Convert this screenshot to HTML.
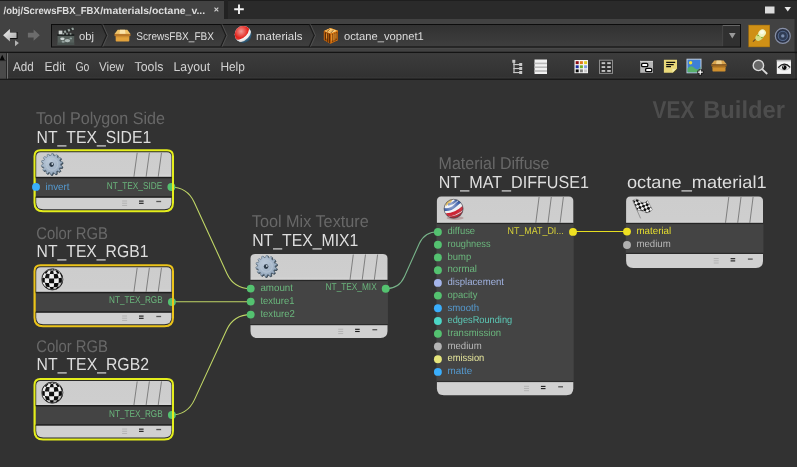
<!DOCTYPE html>
<html lang="en"><head><meta charset="utf-8"><title>VEX Builder - /obj/ScrewsFBX_FBX/materials/octane_vopnet1</title>
<style>
html,body{margin:0;padding:0;background:#323232;overflow:hidden}
svg{display:block;will-change:transform;filter:contrast(1)}
text{font-family:"Liberation Sans",sans-serif;white-space:pre;text-rendering:geometricPrecision}
</style></head><body>
<svg width="797" height="467" viewBox="0 0 797 467">
<rect x="0" y="0" width="797" height="467" fill="#323232"/>
<defs>
<linearGradient id="capg" x1="0" y1="0" x2="0" y2="1"><stop offset="0" stop-color="#cdcdcd"/><stop offset="0.85" stop-color="#cecece"/><stop offset="1" stop-color="#d8d8d8"/></linearGradient>
<linearGradient id="menug" x1="0" y1="0" x2="0" y2="1"><stop offset="0" stop-color="#3c3c3c"/><stop offset="1" stop-color="#313131"/></linearGradient>
<linearGradient id="pathg" x1="0" y1="0" x2="0" y2="1"><stop offset="0" stop-color="#313131"/><stop offset="1" stop-color="#3f3f3f"/></linearGradient>
<radialGradient id="ballsh" cx="0.38" cy="0.32" r="0.75"><stop offset="0" stop-color="#fff" stop-opacity="0.55"/><stop offset="0.55" stop-color="#fff" stop-opacity="0"/><stop offset="1" stop-color="#000" stop-opacity="0.45"/></radialGradient>
<radialGradient id="gearg" cx="0.4" cy="0.35" r="0.8"><stop offset="0" stop-color="#bccada"/><stop offset="1" stop-color="#8ea2b8"/></radialGradient>
<radialGradient id="ballsh2" cx="0.4" cy="0.35" r="0.75"><stop offset="0" stop-color="#fff" stop-opacity="0.12"/><stop offset="0.6" stop-color="#000" stop-opacity="0"/><stop offset="1" stop-color="#000" stop-opacity="0.5"/></radialGradient>
<clipPath id="cball"><circle cx="0" cy="0" r="9.5"/></clipPath>
<clipPath id="cball8"><circle cx="0" cy="0" r="8.2"/></clipPath>
</defs>
<path d="M170.5,187 Q187.2,187 194.2,202.2 L226.9,273.4 Q233.9,288.6 250.6,288.6" fill="none" stroke="#c0d666" stroke-width="1.08"/>
<line x1="170.5" y1="301.8" x2="250.6" y2="301.8" stroke="#c0d666" stroke-width="1.08"/>
<path d="M170.5,415 Q187.5,415 194.5,399.6 L226.6,330.0 Q233.6,314.6 250.6,314.6" fill="none" stroke="#c0d666" stroke-width="1.08"/>
<path d="M385.8,288.7 Q399.0,288.7 404.4,276.7 L419.2,243.8 Q424.6,231.8 437.8,231.8" fill="none" stroke="#78b48a" stroke-width="1.1"/>
<line x1="573" y1="231.5" x2="627" y2="231.5" stroke="#e6de20" stroke-width="1.2"/>
<path d="M34.5,156.20000000000002 Q34.5,150.20000000000002 40.5,150.20000000000002 L167.0,150.20000000000002 Q173.0,150.20000000000002 173.0,156.20000000000002 L173.0,202.79999999999998 Q173.0,211.29999999999998 164.5,211.29999999999998 L43.0,211.29999999999998 Q34.5,211.29999999999998 34.5,202.79999999999998 Z" fill="#2a2a2a" stroke="#e4ee1c" stroke-width="2.0"/>
<rect x="34.5" y="177.5" width="1.30" height="19.599999999999994" fill="#e4ee1c"/>
<rect x="171.4" y="177.0" width="0.8" height="20.599999999999994" fill="#444444"/>
<rect x="35.800000000000004" y="177.0" width="136.0" height="20.599999999999994" fill="#444444"/>
<path d="M36.2,177.5 L36.2,156.8 Q36.2,152.3 40.7,152.3 L166.9,152.3 Q171.4,152.3 171.4,156.8 L171.4,177.5 Z" fill="url(#capg)"/>
<rect x="35.800000000000004" y="176.8" width="136.0" height="1.5" fill="#1e1e1e"/>
<path d="M36.2,197.1 L171.4,197.1 L171.4,202.2 Q171.4,209.2 164.4,209.2 L43.2,209.2 Q36.2,209.2 36.2,202.2 Z" fill="#d0d0d0"/>
<rect x="35.800000000000004" y="196.29999999999998" width="136.0" height="1.5" fill="#1e1e1e"/>
<line x1="137.2" y1="152.70000000000002" x2="133.9" y2="176.9" stroke="#707070" stroke-width="0.85"/>
<line x1="149.4" y1="152.70000000000002" x2="146.1" y2="176.9" stroke="#707070" stroke-width="0.85"/>
<line x1="161.5" y1="152.70000000000002" x2="158.2" y2="176.9" stroke="#707070" stroke-width="0.85"/>
<rect x="122.10000000000001" y="200.55" width="5" height="0.9" fill="#b0b0b0"/>
<rect x="122.10000000000001" y="202.75" width="5" height="0.9" fill="#b0b0b0"/>
<rect x="122.10000000000001" y="204.95" width="5" height="0.9" fill="#b0b0b0"/>
<rect x="139.0" y="200.55" width="4.6" height="1.1" fill="#1a1a1a"/>
<rect x="139.0" y="202.75" width="4.6" height="1.1" fill="#1a1a1a"/>
<rect x="156.3" y="200.85" width="4.8" height="1.3" fill="#555"/>
<text x="35.9" y="124.1" font-size="17.0" fill="#686868" textLength="129.1" lengthAdjust="spacingAndGlyphs" >Tool Polygon Side</text>
<text x="36.6" y="142.7" font-size="17.4" fill="#dedede" textLength="114.6" lengthAdjust="spacingAndGlyphs" >NT_TEX_SIDE1</text>
<path d="M61.13,165.86 L62.86,167.03 L62.47,168.40 L60.38,168.48 L59.81,169.50 L60.87,171.31 L59.92,172.37 L58.00,171.53 L57.05,172.21 L57.22,174.29 L55.90,174.84 L54.54,173.25 L53.38,173.45 L52.63,175.40 L51.21,175.32 L50.67,173.30 L49.55,172.97 L48.02,174.41 L46.77,173.72 L47.16,171.66 L46.29,170.88 L44.29,171.51 L43.47,170.35 L44.72,168.67 L44.27,167.59 L42.20,167.28 L41.96,165.88 L43.81,164.91 L43.87,163.74 L42.14,162.57 L42.53,161.20 L44.62,161.12 L45.19,160.10 L44.13,158.29 L45.08,157.23 L47.00,158.07 L47.95,157.39 L47.78,155.31 L49.10,154.76 L50.46,156.35 L51.62,156.15 L52.37,154.20 L53.79,154.28 L54.33,156.30 L55.45,156.63 L56.98,155.19 L58.23,155.88 L57.84,157.94 L58.71,158.72 L60.71,158.09 L61.53,159.25 L60.28,160.93 L60.73,162.01 L62.80,162.32 L63.04,163.72 L61.19,164.69Z" fill="#34424f" stroke="#34424f" stroke-width="0.8" stroke-linejoin="round"/>
<path d="M60.43,165.16 L62.16,166.33 L61.77,167.70 L59.68,167.78 L59.11,168.80 L60.17,170.61 L59.22,171.67 L57.30,170.83 L56.35,171.51 L56.52,173.59 L55.20,174.14 L53.84,172.55 L52.68,172.75 L51.93,174.70 L50.51,174.62 L49.97,172.60 L48.85,172.27 L47.32,173.71 L46.07,173.02 L46.46,170.96 L45.59,170.18 L43.59,170.81 L42.77,169.65 L44.02,167.97 L43.57,166.89 L41.50,166.58 L41.26,165.18 L43.11,164.21 L43.17,163.04 L41.44,161.87 L41.83,160.50 L43.92,160.42 L44.49,159.40 L43.43,157.59 L44.38,156.53 L46.30,157.37 L47.25,156.69 L47.08,154.61 L48.40,154.06 L49.76,155.65 L50.92,155.45 L51.67,153.50 L53.09,153.58 L53.63,155.60 L54.75,155.93 L56.28,154.49 L57.53,155.18 L57.14,157.24 L58.01,158.02 L60.01,157.39 L60.83,158.55 L59.58,160.23 L60.03,161.31 L62.10,161.62 L62.34,163.02 L60.49,163.99Z" fill="url(#gearg)" stroke="#64788c" stroke-width="0.6" stroke-linejoin="round"/>
<circle cx="52" cy="164.3" r="5.83" fill="none" stroke="#b8c6d4" stroke-width="1.2" opacity="0.7"/>
<circle cx="51.6" cy="164.60000000000002" r="2.3" fill="#2c3a48"/>
<circle cx="52.3" cy="164.0" r="0.9" fill="#c8d4e0"/>
<circle cx="36.0" cy="186.9" r="3.95" fill="#3aaefc"/>
<text x="45.5" y="189.7" font-size="10" fill="#559ad0" textLength="24" lengthAdjust="spacingAndGlyphs" >invert</text>
<text x="106.7" y="188.6" font-size="9.9" fill="#6ab67c" textLength="55.5" lengthAdjust="spacingAndGlyphs" >NT_TEX_SIDE</text>
<circle cx="171.4" cy="187" r="3.95" fill="#54c270"/>
<rect x="172.0" y="175.5" width="2.0" height="23.599999999999994" fill="#e4ee1c"/>
<path d="M34.5,271.2 Q34.5,265.2 40.5,265.2 L167.0,265.2 Q173.0,265.2 173.0,271.2 L173.0,317.8 Q173.0,326.3 164.5,326.3 L43.0,326.3 Q34.5,326.3 34.5,317.8 Z" fill="#2a2a2a" stroke="#ecc41a" stroke-width="2.0"/>
<rect x="34.5" y="292.5" width="1.30" height="19.600000000000023" fill="#ecc41a"/>
<rect x="171.4" y="292.0" width="0.8" height="20.600000000000023" fill="#444444"/>
<rect x="35.800000000000004" y="292.0" width="136.0" height="20.600000000000023" fill="#444444"/>
<path d="M36.2,292.5 L36.2,271.8 Q36.2,267.3 40.7,267.3 L166.9,267.3 Q171.4,267.3 171.4,271.8 L171.4,292.5 Z" fill="url(#capg)"/>
<rect x="35.800000000000004" y="291.8" width="136.0" height="1.5" fill="#1e1e1e"/>
<path d="M36.2,312.1 L171.4,312.1 L171.4,317.2 Q171.4,324.2 164.4,324.2 L43.2,324.2 Q36.2,324.2 36.2,317.2 Z" fill="#d0d0d0"/>
<rect x="35.800000000000004" y="311.3" width="136.0" height="1.5" fill="#1e1e1e"/>
<line x1="137.2" y1="267.7" x2="133.9" y2="291.9" stroke="#707070" stroke-width="0.85"/>
<line x1="149.4" y1="267.7" x2="146.1" y2="291.9" stroke="#707070" stroke-width="0.85"/>
<line x1="161.5" y1="267.7" x2="158.2" y2="291.9" stroke="#707070" stroke-width="0.85"/>
<rect x="122.10000000000001" y="315.55" width="5" height="0.9" fill="#b0b0b0"/>
<rect x="122.10000000000001" y="317.75" width="5" height="0.9" fill="#b0b0b0"/>
<rect x="122.10000000000001" y="319.95" width="5" height="0.9" fill="#b0b0b0"/>
<rect x="139.0" y="315.55" width="4.6" height="1.1" fill="#1a1a1a"/>
<rect x="139.0" y="317.75" width="4.6" height="1.1" fill="#1a1a1a"/>
<rect x="156.3" y="315.85" width="4.8" height="1.3" fill="#555"/>
<text x="36.3" y="238.7" font-size="17.0" fill="#686868" textLength="71.7" lengthAdjust="spacingAndGlyphs" >Color RGB</text>
<text x="36.6" y="257.4" font-size="17.4" fill="#dedede" textLength="111.8" lengthAdjust="spacingAndGlyphs" >NT_TEX_RGB1</text>
<g transform="translate(52.3,279.4)">
<circle cx="0" cy="0" r="10.6" fill="#f2f2f2"/>
<path d="M-1.92,-10.42 L-2.42,-10.32 L-2.87,-10.20 L-3.28,-10.08 L-3.63,-9.96 L-2.74,-10.24 L-1.84,-10.44 L-0.93,-10.53 L-0.00,-10.50 L-0.00,-10.50 L-0.00,-10.50 L-0.00,-10.50 L-0.00,-10.50 L-0.48,-10.58 L-0.95,-10.56 L-1.43,-10.50Z" fill="#0a0a0a"/>
<path d="M-7.05,-7.91 L-7.44,-7.55 L-7.75,-7.24 L-7.98,-6.98 L-8.15,-6.78 L-7.36,-7.62 L-6.49,-8.38 L-5.54,-9.04 L-4.52,-9.58 L-4.38,-9.65 L-4.18,-9.74 L-3.93,-9.84 L-3.63,-9.96 L-4.51,-9.59 L-5.37,-9.14 L-6.22,-8.58Z" fill="#0a0a0a"/>
<path d="M-8.37,6.51 L-8.35,6.53 L-8.29,6.61 L-8.17,6.74 L-7.93,6.88 L-8.59,5.95 L-9.14,4.94 L-9.58,3.87 L-9.89,2.75 L-10.18,2.58 L-10.32,2.41 L-10.36,2.25 L-10.39,2.11 L-10.08,3.29 L-9.63,4.42 L-9.06,5.50Z" fill="#0a0a0a"/>
<path d="M-10.27,-2.64 L-10.32,-2.44 L-10.32,-2.26 L-10.18,-2.09 L-9.89,-1.92 L-9.58,-3.07 L-9.14,-4.17 L-8.59,-5.22 L-7.93,-6.21 L-8.17,-6.35 L-8.28,-6.49 L-8.27,-6.63 L-8.15,-6.78 L-8.84,-5.84 L-9.43,-4.83 L-9.91,-3.76Z" fill="#0a0a0a"/>
<path d="M-4.52,-9.58 L-4.59,-9.50 L-4.59,-9.42 L-4.53,-9.35 L-4.40,-9.27 L-3.35,-9.77 L-2.26,-10.14 L-1.14,-10.38 L-0.00,-10.50 L-0.00,-10.50 L-0.00,-10.50 L-0.00,-10.50 L-0.00,-10.50 L-1.17,-10.46 L-2.32,-10.30 L-3.44,-10.00Z" fill="#0a0a0a"/>
<path d="M-4.40,9.64 L-4.21,9.71 L-3.96,9.78 L-3.65,9.85 L-3.28,9.91 L-4.03,9.44 L-4.72,8.85 L-5.35,8.15 L-5.91,7.35 L-6.57,7.25 L-7.13,7.13 L-7.59,7.01 L-7.93,6.88 L-7.18,7.72 L-6.33,8.47 L-5.40,9.11Z" fill="#0a0a0a"/>
<path d="M-9.89,2.75 L-9.46,2.91 L-8.89,3.07 L-8.19,3.21 L-7.38,3.34 L-7.52,2.20 L-7.57,1.03 L-7.52,-0.15 L-7.38,-1.33 L-8.19,-1.46 L-8.89,-1.60 L-9.46,-1.76 L-9.89,-1.92 L-10.09,-0.75 L-10.15,0.43 L-10.09,1.60Z" fill="#0a0a0a"/>
<path d="M-7.93,-6.21 L-7.59,-6.08 L-7.13,-5.96 L-6.57,-5.84 L-5.91,-5.74 L-5.35,-6.69 L-4.72,-7.56 L-4.03,-8.34 L-3.28,-9.01 L-3.65,-9.07 L-3.96,-9.13 L-4.21,-9.20 L-4.40,-9.27 L-5.40,-8.66 L-6.33,-7.94 L-7.18,-7.12Z" fill="#0a0a0a"/>
<path d="M-0.00,10.60 L-0.00,10.60 L-0.00,10.60 L-0.00,10.60 L-0.00,10.60 L-0.36,10.59 L-0.72,10.55 L-1.07,10.37 L-1.41,10.07 L-1.93,10.04 L-2.42,10.00 L-2.87,9.96 L-3.28,9.91 L-2.50,10.25 L-1.68,10.46 L-0.85,10.57Z" fill="#0a0a0a"/>
<path d="M-5.91,7.35 L-5.17,7.45 L-4.35,7.53 L-3.47,7.59 L-2.54,7.64 L-2.75,6.77 L-2.93,5.82 L-3.07,4.79 L-3.17,3.70 L-4.33,3.64 L-5.43,3.56 L-6.45,3.46 L-7.38,3.34 L-7.14,4.44 L-6.82,5.49 L-6.41,6.46Z" fill="#0a0a0a"/>
<path d="M-7.38,-1.33 L-6.45,-1.21 L-5.43,-1.11 L-4.33,-1.03 L-3.17,-0.97 L-3.07,-2.14 L-2.93,-3.29 L-2.75,-4.40 L-2.54,-5.45 L-3.47,-5.50 L-4.35,-5.56 L-5.17,-5.64 L-5.91,-5.74 L-6.41,-4.71 L-6.82,-3.62 L-7.14,-2.49Z" fill="#0a0a0a"/>
<path d="M-3.28,-9.01 L-2.87,-8.96 L-2.42,-8.91 L-1.93,-8.88 L-1.41,-8.85 L-1.07,-9.44 L-0.72,-9.92 L-0.36,-10.27 L-0.00,-10.50 L-0.00,-10.50 L-0.00,-10.50 L-0.00,-10.50 L-0.00,-10.50 L-0.85,-10.32 L-1.68,-10.00 L-2.50,-9.57Z" fill="#0a0a0a"/>
<path d="M-1.41,10.07 L-0.87,10.09 L-0.32,10.10 L0.23,10.10 L0.79,10.09 L0.96,9.66 L1.13,9.11 L1.28,8.45 L1.42,7.68 L0.42,7.70 L-0.58,7.70 L-1.57,7.68 L-2.54,7.64 L-2.30,8.42 L-2.03,9.08 L-1.73,9.64Z" fill="#0a0a0a"/>
<path d="M-3.17,3.70 L-1.96,3.75 L-0.72,3.77 L0.53,3.77 L1.77,3.75 L1.80,2.62 L1.81,1.45 L1.80,0.27 L1.77,-0.92 L0.53,-0.90 L-0.72,-0.90 L-1.96,-0.92 L-3.17,-0.97 L-3.23,0.22 L-3.25,1.40 L-3.23,2.57Z" fill="#0a0a0a"/>
<path d="M-2.54,-5.45 L-1.57,-5.41 L-0.58,-5.39 L0.42,-5.39 L1.42,-5.41 L1.28,-6.39 L1.13,-7.30 L0.96,-8.11 L0.79,-8.83 L0.23,-8.82 L-0.32,-8.82 L-0.87,-8.83 L-1.41,-8.85 L-1.73,-8.14 L-2.03,-7.33 L-2.30,-6.43Z" fill="#0a0a0a"/>
<path d="M0.00,10.60 L0.00,10.60 L0.00,10.60 L0.00,10.60 L0.00,10.60 L0.72,10.58 L1.44,10.49 L2.13,10.29 L2.80,9.96 L2.34,10.01 L1.85,10.04 L1.33,10.07 L0.79,10.09 L0.60,10.39 L0.40,10.56 L0.20,10.60Z" fill="#0a0a0a"/>
<path d="M1.42,7.68 L2.39,7.65 L3.33,7.60 L4.22,7.54 L5.05,7.46 L5.47,6.58 L5.82,5.61 L6.10,4.57 L6.30,3.48 L5.26,3.57 L4.15,3.65 L2.98,3.71 L1.77,3.75 L1.71,4.84 L1.63,5.86 L1.53,6.82Z" fill="#0a0a0a"/>
<path d="M1.77,-0.92 L2.98,-0.96 L4.15,-1.02 L5.26,-1.10 L6.30,-1.20 L6.10,-2.36 L5.82,-3.50 L5.47,-4.59 L5.05,-5.63 L4.22,-5.55 L3.33,-5.49 L2.39,-5.44 L1.42,-5.41 L1.53,-4.35 L1.63,-3.24 L1.71,-2.09Z" fill="#0a0a0a"/>
<path d="M0.79,-8.83 L1.33,-8.84 L1.85,-8.87 L2.34,-8.91 L2.80,-8.95 L2.13,-9.52 L1.44,-9.97 L0.72,-10.30 L0.00,-10.50 L0.00,-10.50 L0.00,-10.50 L0.00,-10.50 L0.00,-10.50 L0.20,-10.27 L0.40,-9.91 L0.60,-9.43Z" fill="#0a0a0a"/>
<path d="M2.80,9.96 L3.22,9.91 L3.59,9.86 L3.91,9.79 L4.18,9.73 L5.12,9.22 L6.00,8.59 L6.81,7.86 L7.52,7.03 L7.05,7.15 L6.48,7.26 L5.80,7.37 L5.05,7.46 L4.57,8.25 L4.03,8.94 L3.44,9.51Z" fill="#0a0a0a"/>
<path d="M6.30,3.48 L7.24,3.36 L8.07,3.23 L8.79,3.09 L9.38,2.94 L9.56,1.79 L9.62,0.62 L9.56,-0.56 L9.38,-1.73 L8.79,-1.58 L8.07,-1.44 L7.24,-1.31 L6.30,-1.20 L6.42,-0.01 L6.46,1.17 L6.42,2.34Z" fill="#0a0a0a"/>
<path d="M5.05,-5.63 L5.80,-5.72 L6.48,-5.82 L7.05,-5.94 L7.52,-6.06 L6.81,-6.99 L6.00,-7.82 L5.12,-8.56 L4.18,-9.19 L3.91,-9.12 L3.59,-9.06 L3.22,-9.00 L2.80,-8.95 L3.44,-8.27 L4.03,-7.48 L4.57,-6.60Z" fill="#0a0a0a"/>
<path d="M0.00,10.60 L0.00,10.60 L0.00,10.60 L0.00,10.60 L0.00,10.60 L1.20,10.53 L2.38,10.33 L3.54,9.99 L4.64,9.53 L4.61,9.55 L4.52,9.59 L4.38,9.65 L4.18,9.73 L3.18,10.11 L2.14,10.38 L1.08,10.54Z" fill="#0a0a0a"/>
<path d="M7.52,7.03 L7.89,6.90 L8.14,6.76 L8.27,6.63 L8.34,6.54 L9.03,5.56 L9.59,4.51 L10.04,3.41 L10.35,2.27 L10.31,2.44 L10.15,2.61 L9.84,2.78 L9.38,2.94 L9.08,4.05 L8.67,5.11 L8.15,6.11Z" fill="#0a0a0a"/>
<path d="M9.38,-1.73 L9.84,-1.89 L10.15,-2.06 L10.31,-2.24 L10.32,-2.41 L9.99,-3.54 L9.54,-4.62 L8.96,-5.65 L8.28,-6.60 L8.27,-6.46 L8.14,-6.33 L7.89,-6.19 L7.52,-6.06 L8.15,-5.06 L8.67,-4.00 L9.08,-2.88Z" fill="#0a0a0a"/>
<path d="M4.18,-9.19 L4.38,-9.26 L4.52,-9.34 L4.59,-9.41 L4.59,-9.49 L3.50,-9.93 L2.36,-10.25 L1.19,-10.44 L0.00,-10.50 L0.00,-10.50 L0.00,-10.50 L0.00,-10.50 L0.00,-10.50 L1.08,-10.36 L2.14,-10.10 L3.18,-9.70Z" fill="#0a0a0a"/>
<path d="M8.28,-6.60 L8.17,-6.75 L8.01,-6.94 L7.79,-7.19 L7.50,-7.50 L6.68,-8.23 L5.81,-8.86 L4.91,-9.39 L3.98,-9.83 L4.22,-9.73 L4.40,-9.64 L4.53,-9.57 L4.59,-9.49 L5.63,-8.93 L6.60,-8.25 L7.49,-7.48Z" fill="#0a0a0a"/>
<path d="M3.98,-9.83 L3.68,-9.94 L3.33,-10.06 L2.94,-10.19 L2.49,-10.30 L1.86,-10.44 L1.24,-10.53 L0.62,-10.57 L0.00,-10.50 L0.00,-10.50 L0.00,-10.50 L0.00,-10.50 L0.00,-10.50 L1.02,-10.51 L2.03,-10.40 L3.01,-10.16Z" fill="#0a0a0a"/>
<circle cx="0" cy="0" r="10.6" fill="url(#ballsh2)"/>
<circle cx="0" cy="0" r="10.6" fill="none" stroke="#1a1a1a" stroke-width="0.7"/></g>
<text x="109.0" y="303.0" font-size="9.9" fill="#6ab67c" textLength="53.7" lengthAdjust="spacingAndGlyphs" >NT_TEX_RGB</text>
<circle cx="171.9" cy="302" r="3.95" fill="#54c270"/>
<rect x="172.0" y="290.5" width="2.0" height="23.600000000000023" fill="#ecc41a"/>
<path d="M34.5,384.9 Q34.5,378.9 40.5,378.9 L167.0,378.9 Q173.0,378.9 173.0,384.9 L173.0,431.0 Q173.0,439.5 164.5,439.5 L43.0,439.5 Q34.5,439.5 34.5,431.0 Z" fill="#2a2a2a" stroke="#e4ee1c" stroke-width="2.0"/>
<rect x="34.5" y="405.7" width="1.30" height="19.30000000000001" fill="#e4ee1c"/>
<rect x="171.4" y="405.2" width="0.8" height="20.30000000000001" fill="#444444"/>
<rect x="35.800000000000004" y="405.2" width="136.0" height="20.30000000000001" fill="#444444"/>
<path d="M36.2,405.7 L36.2,385.5 Q36.2,381.0 40.7,381.0 L166.9,381.0 Q171.4,381.0 171.4,385.5 L171.4,405.7 Z" fill="url(#capg)"/>
<rect x="35.800000000000004" y="405.0" width="136.0" height="1.5" fill="#1e1e1e"/>
<path d="M36.2,425.0 L171.4,425.0 L171.4,430.4 Q171.4,437.4 164.4,437.4 L43.2,437.4 Q36.2,437.4 36.2,430.4 Z" fill="#d0d0d0"/>
<rect x="35.800000000000004" y="424.2" width="136.0" height="1.5" fill="#1e1e1e"/>
<line x1="137.2" y1="381.4" x2="133.9" y2="405.09999999999997" stroke="#707070" stroke-width="0.85"/>
<line x1="149.4" y1="381.4" x2="146.1" y2="405.09999999999997" stroke="#707070" stroke-width="0.85"/>
<line x1="161.5" y1="381.4" x2="158.2" y2="405.09999999999997" stroke="#707070" stroke-width="0.85"/>
<rect x="122.10000000000001" y="428.60" width="5" height="0.9" fill="#b0b0b0"/>
<rect x="122.10000000000001" y="430.80" width="5" height="0.9" fill="#b0b0b0"/>
<rect x="122.10000000000001" y="433.00" width="5" height="0.9" fill="#b0b0b0"/>
<rect x="139.0" y="428.60" width="4.6" height="1.1" fill="#1a1a1a"/>
<rect x="139.0" y="430.80" width="4.6" height="1.1" fill="#1a1a1a"/>
<rect x="156.3" y="428.90" width="4.8" height="1.3" fill="#555"/>
<text x="36.3" y="351.6" font-size="17.0" fill="#686868" textLength="71.7" lengthAdjust="spacingAndGlyphs" >Color RGB</text>
<text x="36.6" y="370.4" font-size="17.4" fill="#dedede" textLength="112.4" lengthAdjust="spacingAndGlyphs" >NT_TEX_RGB2</text>
<g transform="translate(52.3,392.6)">
<circle cx="0" cy="0" r="10.6" fill="#f2f2f2"/>
<path d="M-1.92,-10.42 L-2.42,-10.32 L-2.87,-10.20 L-3.28,-10.08 L-3.63,-9.96 L-2.74,-10.24 L-1.84,-10.44 L-0.93,-10.53 L-0.00,-10.50 L-0.00,-10.50 L-0.00,-10.50 L-0.00,-10.50 L-0.00,-10.50 L-0.48,-10.58 L-0.95,-10.56 L-1.43,-10.50Z" fill="#0a0a0a"/>
<path d="M-7.05,-7.91 L-7.44,-7.55 L-7.75,-7.24 L-7.98,-6.98 L-8.15,-6.78 L-7.36,-7.62 L-6.49,-8.38 L-5.54,-9.04 L-4.52,-9.58 L-4.38,-9.65 L-4.18,-9.74 L-3.93,-9.84 L-3.63,-9.96 L-4.51,-9.59 L-5.37,-9.14 L-6.22,-8.58Z" fill="#0a0a0a"/>
<path d="M-8.37,6.51 L-8.35,6.53 L-8.29,6.61 L-8.17,6.74 L-7.93,6.88 L-8.59,5.95 L-9.14,4.94 L-9.58,3.87 L-9.89,2.75 L-10.18,2.58 L-10.32,2.41 L-10.36,2.25 L-10.39,2.11 L-10.08,3.29 L-9.63,4.42 L-9.06,5.50Z" fill="#0a0a0a"/>
<path d="M-10.27,-2.64 L-10.32,-2.44 L-10.32,-2.26 L-10.18,-2.09 L-9.89,-1.92 L-9.58,-3.07 L-9.14,-4.17 L-8.59,-5.22 L-7.93,-6.21 L-8.17,-6.35 L-8.28,-6.49 L-8.27,-6.63 L-8.15,-6.78 L-8.84,-5.84 L-9.43,-4.83 L-9.91,-3.76Z" fill="#0a0a0a"/>
<path d="M-4.52,-9.58 L-4.59,-9.50 L-4.59,-9.42 L-4.53,-9.35 L-4.40,-9.27 L-3.35,-9.77 L-2.26,-10.14 L-1.14,-10.38 L-0.00,-10.50 L-0.00,-10.50 L-0.00,-10.50 L-0.00,-10.50 L-0.00,-10.50 L-1.17,-10.46 L-2.32,-10.30 L-3.44,-10.00Z" fill="#0a0a0a"/>
<path d="M-4.40,9.64 L-4.21,9.71 L-3.96,9.78 L-3.65,9.85 L-3.28,9.91 L-4.03,9.44 L-4.72,8.85 L-5.35,8.15 L-5.91,7.35 L-6.57,7.25 L-7.13,7.13 L-7.59,7.01 L-7.93,6.88 L-7.18,7.72 L-6.33,8.47 L-5.40,9.11Z" fill="#0a0a0a"/>
<path d="M-9.89,2.75 L-9.46,2.91 L-8.89,3.07 L-8.19,3.21 L-7.38,3.34 L-7.52,2.20 L-7.57,1.03 L-7.52,-0.15 L-7.38,-1.33 L-8.19,-1.46 L-8.89,-1.60 L-9.46,-1.76 L-9.89,-1.92 L-10.09,-0.75 L-10.15,0.43 L-10.09,1.60Z" fill="#0a0a0a"/>
<path d="M-7.93,-6.21 L-7.59,-6.08 L-7.13,-5.96 L-6.57,-5.84 L-5.91,-5.74 L-5.35,-6.69 L-4.72,-7.56 L-4.03,-8.34 L-3.28,-9.01 L-3.65,-9.07 L-3.96,-9.13 L-4.21,-9.20 L-4.40,-9.27 L-5.40,-8.66 L-6.33,-7.94 L-7.18,-7.12Z" fill="#0a0a0a"/>
<path d="M-0.00,10.60 L-0.00,10.60 L-0.00,10.60 L-0.00,10.60 L-0.00,10.60 L-0.36,10.59 L-0.72,10.55 L-1.07,10.37 L-1.41,10.07 L-1.93,10.04 L-2.42,10.00 L-2.87,9.96 L-3.28,9.91 L-2.50,10.25 L-1.68,10.46 L-0.85,10.57Z" fill="#0a0a0a"/>
<path d="M-5.91,7.35 L-5.17,7.45 L-4.35,7.53 L-3.47,7.59 L-2.54,7.64 L-2.75,6.77 L-2.93,5.82 L-3.07,4.79 L-3.17,3.70 L-4.33,3.64 L-5.43,3.56 L-6.45,3.46 L-7.38,3.34 L-7.14,4.44 L-6.82,5.49 L-6.41,6.46Z" fill="#0a0a0a"/>
<path d="M-7.38,-1.33 L-6.45,-1.21 L-5.43,-1.11 L-4.33,-1.03 L-3.17,-0.97 L-3.07,-2.14 L-2.93,-3.29 L-2.75,-4.40 L-2.54,-5.45 L-3.47,-5.50 L-4.35,-5.56 L-5.17,-5.64 L-5.91,-5.74 L-6.41,-4.71 L-6.82,-3.62 L-7.14,-2.49Z" fill="#0a0a0a"/>
<path d="M-3.28,-9.01 L-2.87,-8.96 L-2.42,-8.91 L-1.93,-8.88 L-1.41,-8.85 L-1.07,-9.44 L-0.72,-9.92 L-0.36,-10.27 L-0.00,-10.50 L-0.00,-10.50 L-0.00,-10.50 L-0.00,-10.50 L-0.00,-10.50 L-0.85,-10.32 L-1.68,-10.00 L-2.50,-9.57Z" fill="#0a0a0a"/>
<path d="M-1.41,10.07 L-0.87,10.09 L-0.32,10.10 L0.23,10.10 L0.79,10.09 L0.96,9.66 L1.13,9.11 L1.28,8.45 L1.42,7.68 L0.42,7.70 L-0.58,7.70 L-1.57,7.68 L-2.54,7.64 L-2.30,8.42 L-2.03,9.08 L-1.73,9.64Z" fill="#0a0a0a"/>
<path d="M-3.17,3.70 L-1.96,3.75 L-0.72,3.77 L0.53,3.77 L1.77,3.75 L1.80,2.62 L1.81,1.45 L1.80,0.27 L1.77,-0.92 L0.53,-0.90 L-0.72,-0.90 L-1.96,-0.92 L-3.17,-0.97 L-3.23,0.22 L-3.25,1.40 L-3.23,2.57Z" fill="#0a0a0a"/>
<path d="M-2.54,-5.45 L-1.57,-5.41 L-0.58,-5.39 L0.42,-5.39 L1.42,-5.41 L1.28,-6.39 L1.13,-7.30 L0.96,-8.11 L0.79,-8.83 L0.23,-8.82 L-0.32,-8.82 L-0.87,-8.83 L-1.41,-8.85 L-1.73,-8.14 L-2.03,-7.33 L-2.30,-6.43Z" fill="#0a0a0a"/>
<path d="M0.00,10.60 L0.00,10.60 L0.00,10.60 L0.00,10.60 L0.00,10.60 L0.72,10.58 L1.44,10.49 L2.13,10.29 L2.80,9.96 L2.34,10.01 L1.85,10.04 L1.33,10.07 L0.79,10.09 L0.60,10.39 L0.40,10.56 L0.20,10.60Z" fill="#0a0a0a"/>
<path d="M1.42,7.68 L2.39,7.65 L3.33,7.60 L4.22,7.54 L5.05,7.46 L5.47,6.58 L5.82,5.61 L6.10,4.57 L6.30,3.48 L5.26,3.57 L4.15,3.65 L2.98,3.71 L1.77,3.75 L1.71,4.84 L1.63,5.86 L1.53,6.82Z" fill="#0a0a0a"/>
<path d="M1.77,-0.92 L2.98,-0.96 L4.15,-1.02 L5.26,-1.10 L6.30,-1.20 L6.10,-2.36 L5.82,-3.50 L5.47,-4.59 L5.05,-5.63 L4.22,-5.55 L3.33,-5.49 L2.39,-5.44 L1.42,-5.41 L1.53,-4.35 L1.63,-3.24 L1.71,-2.09Z" fill="#0a0a0a"/>
<path d="M0.79,-8.83 L1.33,-8.84 L1.85,-8.87 L2.34,-8.91 L2.80,-8.95 L2.13,-9.52 L1.44,-9.97 L0.72,-10.30 L0.00,-10.50 L0.00,-10.50 L0.00,-10.50 L0.00,-10.50 L0.00,-10.50 L0.20,-10.27 L0.40,-9.91 L0.60,-9.43Z" fill="#0a0a0a"/>
<path d="M2.80,9.96 L3.22,9.91 L3.59,9.86 L3.91,9.79 L4.18,9.73 L5.12,9.22 L6.00,8.59 L6.81,7.86 L7.52,7.03 L7.05,7.15 L6.48,7.26 L5.80,7.37 L5.05,7.46 L4.57,8.25 L4.03,8.94 L3.44,9.51Z" fill="#0a0a0a"/>
<path d="M6.30,3.48 L7.24,3.36 L8.07,3.23 L8.79,3.09 L9.38,2.94 L9.56,1.79 L9.62,0.62 L9.56,-0.56 L9.38,-1.73 L8.79,-1.58 L8.07,-1.44 L7.24,-1.31 L6.30,-1.20 L6.42,-0.01 L6.46,1.17 L6.42,2.34Z" fill="#0a0a0a"/>
<path d="M5.05,-5.63 L5.80,-5.72 L6.48,-5.82 L7.05,-5.94 L7.52,-6.06 L6.81,-6.99 L6.00,-7.82 L5.12,-8.56 L4.18,-9.19 L3.91,-9.12 L3.59,-9.06 L3.22,-9.00 L2.80,-8.95 L3.44,-8.27 L4.03,-7.48 L4.57,-6.60Z" fill="#0a0a0a"/>
<path d="M0.00,10.60 L0.00,10.60 L0.00,10.60 L0.00,10.60 L0.00,10.60 L1.20,10.53 L2.38,10.33 L3.54,9.99 L4.64,9.53 L4.61,9.55 L4.52,9.59 L4.38,9.65 L4.18,9.73 L3.18,10.11 L2.14,10.38 L1.08,10.54Z" fill="#0a0a0a"/>
<path d="M7.52,7.03 L7.89,6.90 L8.14,6.76 L8.27,6.63 L8.34,6.54 L9.03,5.56 L9.59,4.51 L10.04,3.41 L10.35,2.27 L10.31,2.44 L10.15,2.61 L9.84,2.78 L9.38,2.94 L9.08,4.05 L8.67,5.11 L8.15,6.11Z" fill="#0a0a0a"/>
<path d="M9.38,-1.73 L9.84,-1.89 L10.15,-2.06 L10.31,-2.24 L10.32,-2.41 L9.99,-3.54 L9.54,-4.62 L8.96,-5.65 L8.28,-6.60 L8.27,-6.46 L8.14,-6.33 L7.89,-6.19 L7.52,-6.06 L8.15,-5.06 L8.67,-4.00 L9.08,-2.88Z" fill="#0a0a0a"/>
<path d="M4.18,-9.19 L4.38,-9.26 L4.52,-9.34 L4.59,-9.41 L4.59,-9.49 L3.50,-9.93 L2.36,-10.25 L1.19,-10.44 L0.00,-10.50 L0.00,-10.50 L0.00,-10.50 L0.00,-10.50 L0.00,-10.50 L1.08,-10.36 L2.14,-10.10 L3.18,-9.70Z" fill="#0a0a0a"/>
<path d="M8.28,-6.60 L8.17,-6.75 L8.01,-6.94 L7.79,-7.19 L7.50,-7.50 L6.68,-8.23 L5.81,-8.86 L4.91,-9.39 L3.98,-9.83 L4.22,-9.73 L4.40,-9.64 L4.53,-9.57 L4.59,-9.49 L5.63,-8.93 L6.60,-8.25 L7.49,-7.48Z" fill="#0a0a0a"/>
<path d="M3.98,-9.83 L3.68,-9.94 L3.33,-10.06 L2.94,-10.19 L2.49,-10.30 L1.86,-10.44 L1.24,-10.53 L0.62,-10.57 L0.00,-10.50 L0.00,-10.50 L0.00,-10.50 L0.00,-10.50 L0.00,-10.50 L1.02,-10.51 L2.03,-10.40 L3.01,-10.16Z" fill="#0a0a0a"/>
<circle cx="0" cy="0" r="10.6" fill="url(#ballsh2)"/>
<circle cx="0" cy="0" r="10.6" fill="none" stroke="#1a1a1a" stroke-width="0.7"/></g>
<text x="109.0" y="416.7" font-size="9.9" fill="#6ab67c" textLength="53.7" lengthAdjust="spacingAndGlyphs" >NT_TEX_RGB</text>
<circle cx="171.9" cy="415" r="3.95" fill="#54c270"/>
<rect x="172.0" y="403.7" width="2.0" height="23.30000000000001" fill="#e4ee1c"/>
<rect x="250.1" y="280.0" width="137.8" height="45.19999999999999" fill="#444444"/>
<path d="M250.5,280.5 L250.5,258.6 Q250.5,254.1 255.0,254.1 L383.0,254.1 Q387.5,254.1 387.5,258.6 L387.5,280.5 Z" fill="url(#capg)"/>
<rect x="250.1" y="279.8" width="137.8" height="1.3" fill="#262626"/>
<path d="M250.5,324.7 L387.5,324.7 L387.5,331.0 Q387.5,338.0 380.5,338.0 L257.5,338.0 Q250.5,338.0 250.5,331.0 Z" fill="#d0d0d0"/>
<rect x="250.1" y="324.0" width="137.8" height="1.2" fill="#2b2b2b"/>
<line x1="353.3" y1="254.5" x2="350.0" y2="279.9" stroke="#707070" stroke-width="0.85"/>
<line x1="365.5" y1="254.5" x2="362.2" y2="279.9" stroke="#707070" stroke-width="0.85"/>
<line x1="377.6" y1="254.5" x2="374.3" y2="279.9" stroke="#707070" stroke-width="0.85"/>
<rect x="338.2" y="328.75" width="5" height="0.9" fill="#b0b0b0"/>
<rect x="338.2" y="330.95" width="5" height="0.9" fill="#b0b0b0"/>
<rect x="338.2" y="333.15" width="5" height="0.9" fill="#b0b0b0"/>
<rect x="355.1" y="328.75" width="4.6" height="1.1" fill="#1a1a1a"/>
<rect x="355.1" y="330.95" width="4.6" height="1.1" fill="#1a1a1a"/>
<rect x="372.4" y="329.05" width="4.8" height="1.3" fill="#555"/>
<text x="251.8" y="226.5" font-size="17.0" fill="#686868" textLength="116.9" lengthAdjust="spacingAndGlyphs" >Tool Mix Texture</text>
<text x="252.2" y="245.5" font-size="17.4" fill="#dedede" textLength="106.2" lengthAdjust="spacingAndGlyphs" >NT_TEX_MIX1</text>
<path d="M275.63,267.86 L277.36,269.03 L276.97,270.40 L274.88,270.48 L274.31,271.50 L275.37,273.31 L274.42,274.37 L272.50,273.53 L271.55,274.21 L271.72,276.29 L270.40,276.84 L269.04,275.25 L267.88,275.45 L267.13,277.40 L265.71,277.32 L265.17,275.30 L264.05,274.97 L262.52,276.41 L261.27,275.72 L261.66,273.66 L260.79,272.88 L258.79,273.51 L257.97,272.35 L259.22,270.67 L258.77,269.59 L256.70,269.28 L256.46,267.88 L258.31,266.91 L258.37,265.74 L256.64,264.57 L257.03,263.20 L259.12,263.12 L259.69,262.10 L258.63,260.29 L259.58,259.23 L261.50,260.07 L262.45,259.39 L262.28,257.31 L263.60,256.76 L264.96,258.35 L266.12,258.15 L266.87,256.20 L268.29,256.28 L268.83,258.30 L269.95,258.63 L271.48,257.19 L272.73,257.88 L272.34,259.94 L273.21,260.72 L275.21,260.09 L276.03,261.25 L274.78,262.93 L275.23,264.01 L277.30,264.32 L277.54,265.72 L275.69,266.69Z" fill="#34424f" stroke="#34424f" stroke-width="0.8" stroke-linejoin="round"/>
<path d="M274.93,267.16 L276.66,268.33 L276.27,269.70 L274.18,269.78 L273.61,270.80 L274.67,272.61 L273.72,273.67 L271.80,272.83 L270.85,273.51 L271.02,275.59 L269.70,276.14 L268.34,274.55 L267.18,274.75 L266.43,276.70 L265.01,276.62 L264.47,274.60 L263.35,274.27 L261.82,275.71 L260.57,275.02 L260.96,272.96 L260.09,272.18 L258.09,272.81 L257.27,271.65 L258.52,269.97 L258.07,268.89 L256.00,268.58 L255.76,267.18 L257.61,266.21 L257.67,265.04 L255.94,263.87 L256.33,262.50 L258.42,262.42 L258.99,261.40 L257.93,259.59 L258.88,258.53 L260.80,259.37 L261.75,258.69 L261.58,256.61 L262.90,256.06 L264.26,257.65 L265.42,257.45 L266.17,255.50 L267.59,255.58 L268.13,257.60 L269.25,257.93 L270.78,256.49 L272.03,257.18 L271.64,259.24 L272.51,260.02 L274.51,259.39 L275.33,260.55 L274.08,262.23 L274.53,263.31 L276.60,263.62 L276.84,265.02 L274.99,265.99Z" fill="url(#gearg)" stroke="#64788c" stroke-width="0.6" stroke-linejoin="round"/>
<circle cx="266.5" cy="266.3" r="5.83" fill="none" stroke="#b8c6d4" stroke-width="1.2" opacity="0.7"/>
<circle cx="266.1" cy="266.6" r="2.3" fill="#2c3a48"/>
<circle cx="266.8" cy="266.0" r="0.9" fill="#c8d4e0"/>
<circle cx="250.7" cy="288.6" r="3.95" fill="#54c270"/>
<text x="260.4" y="290.8" font-size="10" fill="#6ab67c" textLength="32.6" lengthAdjust="spacingAndGlyphs" >amount</text>
<circle cx="250.7" cy="301.6" r="3.95" fill="#54c270"/>
<text x="260.4" y="303.8" font-size="10" fill="#6ab67c" textLength="34" lengthAdjust="spacingAndGlyphs" >texture1</text>
<circle cx="250.7" cy="314.6" r="3.95" fill="#54c270"/>
<text x="260.4" y="316.8" font-size="10" fill="#6ab67c" textLength="34.5" lengthAdjust="spacingAndGlyphs" >texture2</text>
<text x="325.6" y="290.3" font-size="9.9" fill="#6ab67c" textLength="51.1" lengthAdjust="spacingAndGlyphs" >NT_TEX_MIX</text>
<circle cx="385.7" cy="288.7" r="3.95" fill="#54c270"/>
<rect x="436.5" y="223.0" width="137.2" height="159.10000000000002" fill="#444444"/>
<path d="M436.9,223.5 L436.9,201.1 Q436.9,196.6 441.4,196.6 L568.8,196.6 Q573.3,196.6 573.3,201.1 L573.3,223.5 Z" fill="url(#capg)"/>
<rect x="436.5" y="222.8" width="137.2" height="1.3" fill="#262626"/>
<path d="M436.9,381.6 L573.3,381.6 L573.3,388.3 Q573.3,395.3 566.3,395.3 L443.9,395.3 Q436.9,395.3 436.9,388.3 Z" fill="#d0d0d0"/>
<rect x="436.5" y="380.90000000000003" width="137.2" height="1.2" fill="#2b2b2b"/>
<line x1="539.1" y1="197.0" x2="535.8" y2="222.9" stroke="#707070" stroke-width="0.85"/>
<line x1="551.3" y1="197.0" x2="548.0" y2="222.9" stroke="#707070" stroke-width="0.85"/>
<line x1="563.4" y1="197.0" x2="560.1" y2="222.9" stroke="#707070" stroke-width="0.85"/>
<rect x="524.0" y="385.85" width="5" height="0.9" fill="#b0b0b0"/>
<rect x="524.0" y="388.05" width="5" height="0.9" fill="#b0b0b0"/>
<rect x="524.0" y="390.25" width="5" height="0.9" fill="#b0b0b0"/>
<rect x="540.9" y="385.85" width="4.6" height="1.1" fill="#1a1a1a"/>
<rect x="540.9" y="388.05" width="4.6" height="1.1" fill="#1a1a1a"/>
<rect x="558.1999999999999" y="386.15" width="4.8" height="1.3" fill="#555"/>
<text x="438.6" y="168.8" font-size="17.0" fill="#686868" textLength="110.9" lengthAdjust="spacingAndGlyphs" >Material Diffuse</text>
<text x="438.8" y="188.2" font-size="17.4" fill="#dedede" textLength="150.2" lengthAdjust="spacingAndGlyphs" >NT_MAT_DIFFUSE1</text>
<g transform="translate(453.6,208.8)"><ellipse cx="1.5" cy="9.3" rx="8.5" ry="1.8" fill="#7a2020" opacity="0.25"/><g clip-path="url(#cball)">
<rect x="-11" y="-11" width="22" height="22" fill="#eef0f4"/>
<path d="M-8,-6 Q-5,-10.5 -1,-9.5 L-3.5,-4.5 Q-6,-4.5 -8,-2.5Z" fill="#d8a830"/>
<path d="M-10,0.6 Q-3,1.6 1.5,-3 T9,-8" fill="none" stroke="#3458a4" stroke-width="2.9"/>
<path d="M-5.5,-4.2 Q0,-5 3.5,-9.5" fill="none" stroke="#3456a0" stroke-width="2.4"/>
<path d="M-7.5,6.2 Q2,6 10,-1.5" fill="none" stroke="#cc2030" stroke-width="3.3"/>
<path d="M-4,9 Q4,8.6 10,3.4" fill="none" stroke="#b81826" stroke-width="2.6"/>
<path d="M-2,10.6 Q4,10.8 8.5,7" fill="none" stroke="#2e7a44" stroke-width="1.4"/>
<circle cx="0" cy="0" r="10.3" fill="url(#ballsh)"/>
</g><circle cx="0" cy="0" r="9.5" fill="none" stroke="#3a3a44" stroke-width="0.8" opacity="0.8"/></g>
<circle cx="437.9" cy="232.0" r="3.95" fill="#54c270"/>
<text x="447.5" y="234.2" font-size="10" fill="#6ab67c" textLength="27.6" lengthAdjust="spacingAndGlyphs" >diffuse</text>
<circle cx="437.9" cy="244.7" r="3.95" fill="#54c270"/>
<text x="447.5" y="246.9" font-size="10" fill="#6ab67c" textLength="43" lengthAdjust="spacingAndGlyphs" >roughness</text>
<circle cx="437.9" cy="257.4" r="3.95" fill="#54c270"/>
<text x="447.5" y="259.6" font-size="10" fill="#6ab67c" textLength="23.7" lengthAdjust="spacingAndGlyphs" >bump</text>
<circle cx="437.9" cy="270.2" r="3.95" fill="#54c270"/>
<text x="447.5" y="272.4" font-size="10" fill="#6ab67c" textLength="29.5" lengthAdjust="spacingAndGlyphs" >normal</text>
<circle cx="437.9" cy="282.9" r="3.95" fill="#a4b4ea"/>
<text x="447.5" y="285.1" font-size="10" fill="#a0b2e0" textLength="56.5" lengthAdjust="spacingAndGlyphs" >displacement</text>
<circle cx="437.9" cy="295.6" r="3.95" fill="#54c270"/>
<text x="447.5" y="297.8" font-size="10" fill="#6ab67c" textLength="29.9" lengthAdjust="spacingAndGlyphs" >opacity</text>
<circle cx="437.9" cy="308.3" r="3.95" fill="#3aaefc"/>
<text x="447.5" y="310.5" font-size="10" fill="#559ad0" textLength="31.5" lengthAdjust="spacingAndGlyphs" >smooth</text>
<circle cx="437.9" cy="321.0" r="3.95" fill="#4cd6c6"/>
<text x="447.5" y="323.2" font-size="10" fill="#5cc8b6" textLength="64.7" lengthAdjust="spacingAndGlyphs" >edgesRounding</text>
<circle cx="437.9" cy="333.8" r="3.95" fill="#54c270"/>
<text x="447.5" y="336.0" font-size="10" fill="#6ab67c" textLength="53.5" lengthAdjust="spacingAndGlyphs" >transmission</text>
<circle cx="437.9" cy="346.5" r="3.95" fill="#b4b4b4"/>
<text x="447.5" y="348.7" font-size="10" fill="#b8b8b8" textLength="34.2" lengthAdjust="spacingAndGlyphs" >medium</text>
<circle cx="437.9" cy="359.2" r="3.95" fill="#e6e67c"/>
<text x="447.5" y="361.4" font-size="10" fill="#e6e69c" textLength="36.8" lengthAdjust="spacingAndGlyphs" >emission</text>
<circle cx="437.9" cy="371.9" r="3.95" fill="#3aaefc"/>
<text x="447.5" y="374.1" font-size="10" fill="#559ad0" textLength="24.6" lengthAdjust="spacingAndGlyphs" >matte</text>
<text x="507.5" y="233.6" font-size="9.9" fill="#d8d238" textLength="56.2" lengthAdjust="spacingAndGlyphs" >NT_MAT_DI...</text>
<circle cx="573.0" cy="231.9" r="3.95" fill="#eee022"/>
<rect x="625.7" y="223.0" width="137.7" height="31.0" fill="#444444"/>
<path d="M626.1,223.5 L626.1,201.1 Q626.1,196.6 630.6,196.6 L758.5,196.6 Q763,196.6 763,201.1 L763,223.5 Z" fill="url(#capg)"/>
<rect x="625.7" y="222.8" width="137.7" height="1.3" fill="#262626"/>
<path d="M626.1,253.5 L763,253.5 L763,261.0 Q763,268.0 756,268.0 L633.1,268.0 Q626.1,268.0 626.1,261.0 Z" fill="#d0d0d0"/>
<rect x="625.7" y="252.8" width="137.7" height="1.2" fill="#2b2b2b"/>
<line x1="728.8" y1="197.0" x2="725.5" y2="222.9" stroke="#707070" stroke-width="0.85"/>
<line x1="741.0" y1="197.0" x2="737.7" y2="222.9" stroke="#707070" stroke-width="0.85"/>
<line x1="753.1" y1="197.0" x2="749.8" y2="222.9" stroke="#707070" stroke-width="0.85"/>
<rect x="713.7" y="258.15" width="5" height="0.9" fill="#b0b0b0"/>
<rect x="713.7" y="260.35" width="5" height="0.9" fill="#b0b0b0"/>
<rect x="713.7" y="262.55" width="5" height="0.9" fill="#b0b0b0"/>
<rect x="730.6" y="258.15" width="4.6" height="1.1" fill="#1a1a1a"/>
<rect x="730.6" y="260.35" width="4.6" height="1.1" fill="#1a1a1a"/>
<rect x="747.9" y="258.45" width="4.8" height="1.3" fill="#555"/>
<text x="627.0" y="187.8" font-size="17.4" fill="#dedede" textLength="139.6" lengthAdjust="spacingAndGlyphs" >octane_material1</text>
<g transform="translate(626,195)">
<path d="M6.6,5.2 L14.6,23.4" stroke="#8c8c8c" stroke-width="0.9"/>
<clipPath id="cflag"><path d="M7,5.4 Q10.5,2.6 14,6.2 T21.6,5.6 L26.3,14.6 Q22.5,19.4 18.6,17 T11.4,15.6 Z"/></clipPath>
<path d="M7,5.4 Q10.5,2.6 14,6.2 T21.6,5.6 L26.3,14.6 Q22.5,19.4 18.6,17 T11.4,15.6 Z" fill="#f0f0f0"/>
<g clip-path="url(#cflag)"><g transform="rotate(24 7 5)">
<rect x="4.30" y="-3.10" width="2.7" height="2.7" fill="#101010"/>
<rect x="4.30" y="2.30" width="2.7" height="2.7" fill="#101010"/>
<rect x="4.30" y="7.70" width="2.7" height="2.7" fill="#101010"/>
<rect x="4.30" y="13.10" width="2.7" height="2.7" fill="#101010"/>
<rect x="4.30" y="18.50" width="2.7" height="2.7" fill="#101010"/>
<rect x="7.00" y="-0.40" width="2.7" height="2.7" fill="#101010"/>
<rect x="7.00" y="5.00" width="2.7" height="2.7" fill="#101010"/>
<rect x="7.00" y="10.40" width="2.7" height="2.7" fill="#101010"/>
<rect x="7.00" y="15.80" width="2.7" height="2.7" fill="#101010"/>
<rect x="7.00" y="21.20" width="2.7" height="2.7" fill="#101010"/>
<rect x="9.70" y="-3.10" width="2.7" height="2.7" fill="#101010"/>
<rect x="9.70" y="2.30" width="2.7" height="2.7" fill="#101010"/>
<rect x="9.70" y="7.70" width="2.7" height="2.7" fill="#101010"/>
<rect x="9.70" y="13.10" width="2.7" height="2.7" fill="#101010"/>
<rect x="9.70" y="18.50" width="2.7" height="2.7" fill="#101010"/>
<rect x="12.40" y="-0.40" width="2.7" height="2.7" fill="#101010"/>
<rect x="12.40" y="5.00" width="2.7" height="2.7" fill="#101010"/>
<rect x="12.40" y="10.40" width="2.7" height="2.7" fill="#101010"/>
<rect x="12.40" y="15.80" width="2.7" height="2.7" fill="#101010"/>
<rect x="12.40" y="21.20" width="2.7" height="2.7" fill="#101010"/>
<rect x="15.10" y="-3.10" width="2.7" height="2.7" fill="#101010"/>
<rect x="15.10" y="2.30" width="2.7" height="2.7" fill="#101010"/>
<rect x="15.10" y="7.70" width="2.7" height="2.7" fill="#101010"/>
<rect x="15.10" y="13.10" width="2.7" height="2.7" fill="#101010"/>
<rect x="15.10" y="18.50" width="2.7" height="2.7" fill="#101010"/>
<rect x="17.80" y="-0.40" width="2.7" height="2.7" fill="#101010"/>
<rect x="17.80" y="5.00" width="2.7" height="2.7" fill="#101010"/>
<rect x="17.80" y="10.40" width="2.7" height="2.7" fill="#101010"/>
<rect x="17.80" y="15.80" width="2.7" height="2.7" fill="#101010"/>
<rect x="17.80" y="21.20" width="2.7" height="2.7" fill="#101010"/>
<rect x="20.50" y="-3.10" width="2.7" height="2.7" fill="#101010"/>
<rect x="20.50" y="2.30" width="2.7" height="2.7" fill="#101010"/>
<rect x="20.50" y="7.70" width="2.7" height="2.7" fill="#101010"/>
<rect x="20.50" y="13.10" width="2.7" height="2.7" fill="#101010"/>
<rect x="20.50" y="18.50" width="2.7" height="2.7" fill="#101010"/>
<rect x="23.20" y="-0.40" width="2.7" height="2.7" fill="#101010"/>
<rect x="23.20" y="5.00" width="2.7" height="2.7" fill="#101010"/>
<rect x="23.20" y="10.40" width="2.7" height="2.7" fill="#101010"/>
<rect x="23.20" y="15.80" width="2.7" height="2.7" fill="#101010"/>
<rect x="23.20" y="21.20" width="2.7" height="2.7" fill="#101010"/>
<rect x="25.90" y="-3.10" width="2.7" height="2.7" fill="#101010"/>
<rect x="25.90" y="2.30" width="2.7" height="2.7" fill="#101010"/>
<rect x="25.90" y="7.70" width="2.7" height="2.7" fill="#101010"/>
<rect x="25.90" y="13.10" width="2.7" height="2.7" fill="#101010"/>
<rect x="25.90" y="18.50" width="2.7" height="2.7" fill="#101010"/>
<rect x="28.60" y="-0.40" width="2.7" height="2.7" fill="#101010"/>
<rect x="28.60" y="5.00" width="2.7" height="2.7" fill="#101010"/>
<rect x="28.60" y="10.40" width="2.7" height="2.7" fill="#101010"/>
<rect x="28.60" y="15.80" width="2.7" height="2.7" fill="#101010"/>
<rect x="28.60" y="21.20" width="2.7" height="2.7" fill="#101010"/>
<rect x="31.30" y="-3.10" width="2.7" height="2.7" fill="#101010"/>
<rect x="31.30" y="2.30" width="2.7" height="2.7" fill="#101010"/>
<rect x="31.30" y="7.70" width="2.7" height="2.7" fill="#101010"/>
<rect x="31.30" y="13.10" width="2.7" height="2.7" fill="#101010"/>
<rect x="31.30" y="18.50" width="2.7" height="2.7" fill="#101010"/>
</g></g>
<path d="M7,5.4 Q10.5,2.6 14,6.2 T21.6,5.6 L26.3,14.6 Q22.5,19.4 18.6,17 T11.4,15.6 Z" fill="none" stroke="#555" stroke-width="0.4"/>
</g>
<circle cx="627" cy="231.6" r="3.95" fill="#eee022"/>
<text x="636.4" y="233.8" font-size="10" fill="#e6de30" textLength="34.8" lengthAdjust="spacingAndGlyphs" >material</text>
<circle cx="627" cy="245" r="3.95" fill="#b0b0b0"/>
<text x="636.4" y="247.2" font-size="10" fill="#b8b8b8" textLength="34.3" lengthAdjust="spacingAndGlyphs" >medium</text>
<text y="117.5" font-size="24.4" font-weight="bold" fill="#4d4d4d"><tspan x="652.6" textLength="41.8" lengthAdjust="spacingAndGlyphs">VEX</tspan> <tspan x="703.2" textLength="81.8" lengthAdjust="spacingAndGlyphs">Builder</tspan></text>
<rect x="0" y="0" width="797" height="80" fill="#424242"/>
<rect x="0" y="0" width="797" height="19" fill="#2a2a2a"/>
<rect x="0" y="0" width="797" height="1" fill="#1e1e1e"/>
<rect x="0" y="1" width="224" height="18.5" fill="#424242"/>
<rect x="224" y="0" width="4" height="19" fill="#222"/>
<text y="13.7" font-size="10.2" font-weight="bold" fill="#dedede"><tspan x="3.6" textLength="96.2" lengthAdjust="spacingAndGlyphs">/obj/ScrewsFBX_FBX</tspan><tspan x="100.2" textLength="105" lengthAdjust="spacingAndGlyphs">/materials/octane_v...</tspan></text>
<path d="M214.5,7.6 L218.3,11.4 M218.3,7.6 L214.5,11.4" stroke="#cfcfcf" stroke-width="1.1"/>
<path d="M239,4.5 V14 M234.2,9.2 H243.8" stroke="#f2f2f2" stroke-width="1.9"/>
<rect x="765" y="6.5" width="9.5" height="7" fill="#dcdcdc"/>
<path d="M784.5,7 L791,7 L787.75,11.6 Z" fill="#e8e8e8"/>
<rect x="794.5" y="19" width="2.5" height="61" fill="#2c2c2c"/>
<rect x="51.5" y="24.5" width="689" height="22.5" fill="url(#pathg)"/><rect x="51" y="48" width="690" height="0.8" fill="#4a4a4a"/>
<rect x="722.6" y="25" width="17.9" height="21.5" fill="#303030"/><rect x="722.2" y="25" width="0.9" height="21.5" fill="#474747"/><rect x="723" y="25" width="17.5" height="0.9" fill="#6c6c6c"/>
<rect x="51.5" y="24.5" width="689" height="22.5" fill="none" stroke="#0c0c0c" stroke-width="1"/>
<path d="M729,33 L735.6,33 L732.3,38.4 Z" fill="#9a9a9a"/>
<path d="M101.5,24.3 L106.5,35.5 L101.5,46.7" fill="none" stroke="#1c1c1c" stroke-width="1.2"/>
<path d="M102.8,24.3 L107.8,35.5 L102.8,46.7" fill="none" stroke="#555" stroke-width="0.8"/>
<path d="M220.8,24.3 L225.8,35.5 L220.8,46.7" fill="none" stroke="#1c1c1c" stroke-width="1.2"/>
<path d="M222.10000000000002,24.3 L227.10000000000002,35.5 L222.10000000000002,46.7" fill="none" stroke="#555" stroke-width="0.8"/>
<path d="M309.2,24.3 L314.2,35.5 L309.2,46.7" fill="none" stroke="#1c1c1c" stroke-width="1.2"/>
<path d="M310.5,24.3 L315.5,35.5 L310.5,46.7" fill="none" stroke="#555" stroke-width="0.8"/>
<text x="79" y="39.8" font-size="11.2" fill="#dcdcdc" textLength="15" lengthAdjust="spacingAndGlyphs" >obj</text>
<text x="136.3" y="39.8" font-size="11.2" fill="#dcdcdc" textLength="77.7" lengthAdjust="spacingAndGlyphs" >ScrewsFBX_FBX</text>
<text x="256" y="39.8" font-size="11.2" fill="#dcdcdc" textLength="46.5" lengthAdjust="spacingAndGlyphs" >materials</text>
<text x="344" y="39.8" font-size="11.2" fill="#dcdcdc" textLength="79.8" lengthAdjust="spacingAndGlyphs" >octane_vopnet1</text>
<defs><linearGradient id="arg" x1="0" y1="0" x2="1" y2="1"><stop offset="0" stop-color="#f4f4f4"/><stop offset="1" stop-color="#a4a4a4"/></linearGradient></defs>
<path d="M10.2,32.6 L17,32.6 L17,38.4 L10.2,38.4" fill="none" stroke="#101010" stroke-width="1.2"/>
<path d="M3.1,35.2 L9.9,28.9 L9.9,32.5 L16.5,32.5 L16.5,37.9 L9.9,37.9 L9.9,41.5 Z" fill="url(#arg)"/>
<path d="M15,40.2 L18.9,43.1 L15,46.2 Z" fill="#b4b4b4"/>
<path d="M39.8,35.2 L33.6,29.6 L33.6,32.8 L27.9,32.8 L27.9,37.5 L33.6,37.5 L33.6,40.8 Z" fill="#6c6c6c"/>
<g><rect x="57.6" y="35.6" width="16.6" height="9.4" fill="#56605c"/><rect x="57.6" y="42.6" width="16.6" height="2.4" fill="#4a5350"/><rect x="57.3" y="34.1" width="17" height="1.8" fill="#1c2120"/><path d="M61.6,31.6 L73.9,27.1 L74.6,29.5 L62.3,34Z" fill="#262b2a"/><path d="M63.6,30.9 L65.6,30.2 L66.6,32.4 L64.6,33.1Z M67.4,29.5 L69.4,28.8 L70.4,31 L68.4,31.7Z M71.2,28.1 L73.2,27.4 L74.2,29.6 L72.2,30.3Z" fill="#9aa5a1"/><rect x="62.6" y="32.9" width="1.6" height="1.8" fill="#8d9894"/><rect x="66.2" y="32.9" width="1.6" height="1.8" fill="#8d9894"/><rect x="69.8" y="32.9" width="1.6" height="1.8" fill="#8d9894"/><rect x="58.7" y="30.6" width="3.7" height="3.7" fill="#cdd3d1"/><ellipse cx="62.4" cy="38.8" rx="2.2" ry="1.4" fill="#ccd6d4"/><ellipse cx="67.4" cy="40.6" rx="2.8" ry="1.7" fill="#aebab8"/><ellipse cx="63.2" cy="41.8" rx="1.6" ry="1" fill="#93a19e"/><ellipse cx="70.8" cy="38.4" rx="1.3" ry="0.9" fill="#8fa09c"/></g>
<g transform="translate(114.5,29.3) scale(1)"><path d="M3.2,0.5 L12.8,0.5 L16,4.6 L0,4.6Z" fill="#f0c46a"/><path d="M5.5,0.5 L10.5,0.5 L11,4.6 L5,4.6Z" fill="#fbe3a8"/><rect x="0" y="4.6" width="16" height="2.2" fill="#b8782a"/><rect x="1.2" y="6.8" width="13.6" height="5.4" rx="0.8" fill="#e2a23c"/><rect x="1.2" y="6.8" width="13.6" height="1.2" fill="#c98a30"/></g>
<clipPath id="cball8b"><circle cx="0" cy="0" r="8.4"/></clipPath>
<g transform="translate(243.1,34.4)"><g clip-path="url(#cball8b)"><rect x="-9" y="-9" width="18" height="18" fill="#1f5c84"/><g transform="rotate(-47)"><ellipse cx="0.6" cy="-1.6" rx="10.5" ry="7.6" fill="#f4f4f4"/><ellipse cx="0.8" cy="-4.2" rx="10" ry="7.2" fill="#e4221a"/></g><circle cx="0" cy="0" r="8.4" fill="url(#ballsh)"/></g></g>
<g transform="translate(322.4,27.6)"><path d="M1.5,3.4 L8,0.4 L15.6,3.2 L15.6,12.6 L8.2,16.2 L1.5,12.4Z" fill="#d4700e"/><path d="M1.5,3.4 L8,0.4 L15.6,3.2 L8.4,6Z" fill="#f0a43a"/><path d="M8.4,6 L8.2,16.2 L1.5,12.4 L1.5,3.4Z" fill="#b45a0a"/><path d="M3.2,4.8 V12.6 M5.3,5.6 V14.2 M7.2,6.4 V15.4 M10.4,6.2 V14.6 M12.6,5.2 V13.6 M14.4,4.6 V12.4" stroke="#3c1c02" stroke-width="0.8"/><path d="M4.2,6 V11 M9.4,7 V13 M11.6,6 V12.6 M13.6,5.6 V11" stroke="#f6b04a" stroke-width="0.7"/><path d="M3,3.4 L8.2,5.2 L13.6,3 M5,2.2 L10.4,4.2 M7,1.4 L12.6,3.2" stroke="#fde6a8" stroke-width="0.7" fill="none"/><path d="M4.6,4.2 L7,1.8 M8.4,5.4 L11,2.6" stroke="#5a2c04" stroke-width="0.7"/></g>
<rect x="748.2" y="24.8" width="21.8" height="22.4" fill="#9a6c14"/><rect x="749" y="25.4" width="20.4" height="21.2" fill="#cf9016"/>
<g transform="translate(759.6,35.6) rotate(-42)"><path d="M-9,0 L-3,0" stroke="#5e4626" stroke-width="1.1"/><ellipse cx="-0.9" cy="0.9" rx="4.7" ry="3.3" fill="#d5de82"/><path d="M-1.6,-1.6 Q1.6,0.6 0.4,3.6" stroke="#7aa82c" stroke-width="1.3" fill="none"/><ellipse cx="3.6" cy="-0.2" rx="3.9" ry="3.5" fill="#f1f4c2"/><ellipse cx="4.2" cy="-0.9" rx="2.2" ry="1.9" fill="#fbfce6"/></g>
<circle cx="782.8" cy="35.9" r="7.5" fill="#2a3246" stroke="#8890a6" stroke-width="1.2"/><circle cx="782.8" cy="35.9" r="4.6" fill="#303c54" stroke="#566a8e" stroke-width="1.1"/><circle cx="782.8" cy="35.9" r="1.7" fill="#7c8eae"/>
<rect x="0" y="51.7" width="797" height="1.5" fill="#141414"/>
<rect x="0" y="53.2" width="794.5" height="25.4" fill="url(#menug)"/>
<rect x="0" y="77.6" width="794.5" height="0.9" fill="#3e3e3e"/>
<rect x="0" y="78.5" width="797" height="1.4" fill="#161616"/>
<rect x="0" y="53.2" width="6" height="25.4" fill="#4a4a4a"/>
<rect x="6" y="53.2" width="0.9" height="25.4" fill="#1c1c1c"/>
<rect x="6.9" y="53.2" width="1" height="25.4" fill="#787878"/>
<rect x="0" y="60.2" width="6" height="0.9" fill="#2e2e2e"/>
<path d="M-0.4,60.3 L2.2,54.8 L4.8,60.3Z" fill="#060606"/>
<text x="13.1" y="70.9" font-size="12.9" fill="#d2d2d2" textLength="20.7" lengthAdjust="spacingAndGlyphs" >Add</text>
<text x="44.5" y="70.9" font-size="12.9" fill="#d2d2d2" textLength="20.8" lengthAdjust="spacingAndGlyphs" >Edit</text>
<text x="75.4" y="70.9" font-size="12.9" fill="#d2d2d2" textLength="14.0" lengthAdjust="spacingAndGlyphs" >Go</text>
<text x="99" y="70.9" font-size="12.9" fill="#d2d2d2" textLength="25" lengthAdjust="spacingAndGlyphs" >View</text>
<text x="134.5" y="70.9" font-size="12.9" fill="#d2d2d2" textLength="28.8" lengthAdjust="spacingAndGlyphs" >Tools</text>
<text x="173.6" y="70.9" font-size="12.9" fill="#d2d2d2" textLength="36.6" lengthAdjust="spacingAndGlyphs" >Layout</text>
<text x="220.4" y="70.9" font-size="12.9" fill="#d2d2d2" textLength="24.5" lengthAdjust="spacingAndGlyphs" >Help</text>
<g fill="#c8c8c8" stroke="none"><rect x="512.3" y="59.8" width="3" height="3"/><rect x="513.4" y="62" width="1.2" height="11.1"/><rect x="513.4" y="64" width="6.5" height="1.1"/><rect x="513.4" y="68" width="6.5" height="1.1"/><rect x="513.4" y="72" width="6.5" height="1.1"/><rect x="519.2" y="63" width="3" height="3"/><rect x="519.2" y="67" width="3" height="3"/><rect x="519.2" y="71" width="3" height="3"/></g>
<rect x="534.5" y="59.5" width="12.5" height="14.5" fill="#f0f0f0"/>
<rect x="534.5" y="62.6" width="12.5" height="1.6" fill="#b8b8b8"/>
<rect x="534.5" y="66.4" width="12.5" height="1.6" fill="#b8b8b8"/>
<rect x="534.5" y="70.2" width="12.5" height="1.6" fill="#b8b8b8"/>
<rect x="574.5" y="60" width="13.5" height="13.2" fill="#f4f4f4"/>
<rect x="575.7" y="61.2" width="3" height="2.9" fill="#8c0a12"/>
<rect x="579.9" y="61.2" width="3" height="2.9" fill="#e07818"/>
<rect x="584.1" y="61.2" width="3" height="2.9" fill="#dcc820"/>
<rect x="575.7" y="65.3" width="3" height="2.9" fill="#1a2a9c"/>
<rect x="579.9" y="65.3" width="3" height="2.9" fill="#6cac28"/>
<rect x="584.1" y="65.3" width="3" height="2.9" fill="#7c98dc"/>
<rect x="575.7" y="69.4" width="3" height="2.9" fill="#050505"/>
<rect x="579.9" y="69.4" width="3" height="2.9" fill="#7c7c7c"/>
<rect x="584.1" y="69.4" width="3" height="2.9" fill="#c8c8c8"/>
<rect x="599.5" y="60.2" width="13" height="13.2" fill="#2e2e2e" stroke="#8c8c8c" stroke-width="1"/>
<rect x="601.6" y="62.2" width="3.6" height="1.9" fill="#c2c2c2"/>
<rect x="607.2" y="62.2" width="3.6" height="1.9" fill="#c2c2c2"/>
<rect x="601.6" y="66.1" width="3.6" height="1.9" fill="#c2c2c2"/>
<rect x="607.2" y="66.1" width="3.6" height="1.9" fill="#c2c2c2"/>
<rect x="601.6" y="70.0" width="3.6" height="1.9" fill="#c2c2c2"/>
<rect x="607.2" y="70.0" width="3.6" height="1.9" fill="#c2c2c2"/>
<rect x="640.2" y="60" width="12.8" height="12.8" fill="#b6b6b6"/><rect x="640.2" y="60" width="12.8" height="1" fill="#4a4a4a"/><rect x="640.2" y="61" width="12.8" height="0.8" fill="#d4d4d4"/>
<rect x="641.6" y="63.4" width="6.2" height="3.2" rx="1.2" fill="#fff" stroke="#050505" stroke-width="1.3"/><rect x="645.6" y="68.4" width="6.2" height="3.2" rx="1.2" fill="#fff" stroke="#050505" stroke-width="1.3"/>
<path d="M663.9,59.8 H677 V68.6 L672.6,72.8 H663.9Z" fill="#ead97a"/><path d="M677,68.4 L672.6,72.8 Q672.8,69.6 672,68.6 Q674.6,69.4 677,68.4Z" fill="#f4ecaa"/><path d="M673,72.9 L677.2,68.8" stroke="#6a5e1a" stroke-width="0.7"/><path d="M666.2,62.4 H675.2 M666.2,64.6 H673.7 M666.2,66.6 H671" stroke="#0c0c0c" stroke-width="1.1"/>
<rect x="687" y="59.2" width="14" height="13.6" fill="#3d7fd6" stroke="#c4d2e2" stroke-width="1"/><path d="M687.5,72.3 L687.5,68.5 Q691,64.5 694.5,68 T700.5,66.5 V72.3Z" fill="#58b06a"/><circle cx="690.6" cy="62.8" r="1.7" fill="#f0e03a"/>
<path d="M700.2,69 V75.4 M697,72.2 H703.4" stroke="#0a0a0a" stroke-width="2.8"/><path d="M700.2,69.6 V74.8 M697.6,72.2 H702.8" stroke="#fff" stroke-width="1.3"/>
<g transform="translate(711.3,59.9) scale(0.96)"><path d="M3.2,0.5 L12.8,0.5 L16,4.6 L0,4.6Z" fill="#d9a44e"/><path d="M5.5,0.5 L10.5,0.5 L11,4.6 L5,4.6Z" fill="#efcf8c"/><rect x="0" y="4.6" width="16" height="2.2" fill="#9a6420"/><rect x="1.2" y="6.8" width="13.6" height="5.4" rx="0.8" fill="#d0902e"/><rect x="1.2" y="6.8" width="13.6" height="1.2" fill="#b0741f"/></g>
<circle cx="758.4" cy="65.4" r="5.2" fill="#686868" stroke="#dadada" stroke-width="1.4"/><path d="M762.4,69.4 L766.7,73.5" stroke="#dadada" stroke-width="1.8" stroke-linecap="round"/>
<rect x="776.8" y="59.9" width="14.2" height="14" fill="#f4f4f4"/><rect x="776.8" y="59.9" width="14.2" height="1.5" fill="#b4b4b4"/>
<path d="M778.4,67.8 Q784.2,61.4 790,67.8 Q784.2,72.6 778.4,67.8Z" fill="#e9e9e9" stroke="#9a9a9a" stroke-width="0.6"/>
<path d="M778.2,67.6 Q784.2,60.8 790.2,67.4" fill="none" stroke="#1a1a1a" stroke-width="1.3"/>
<circle cx="784.3" cy="67.6" r="2.3" fill="#050505"/><circle cx="783.5" cy="66.8" r="0.6" fill="#fff"/>
</svg>
</body></html>
